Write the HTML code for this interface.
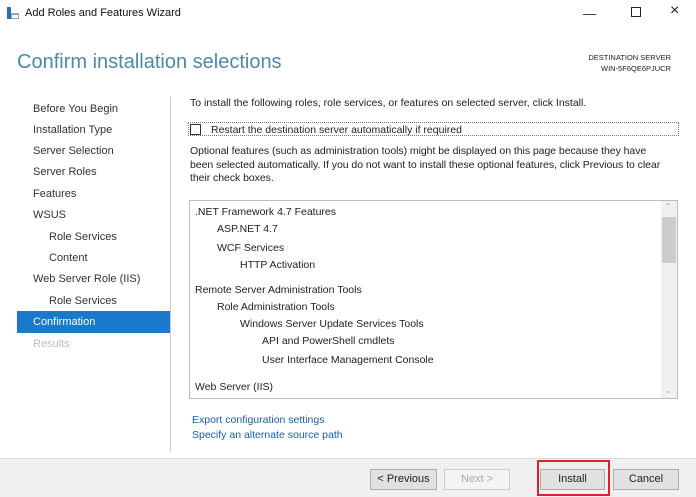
<!DOCTYPE html>
<html><head><meta charset="utf-8"><style>
*{margin:0;padding:0;box-sizing:border-box}
body{width:696px;height:497px;background:#fff;font-family:"Liberation Sans",sans-serif;font-size:11px;color:#1e1e1e;position:relative;overflow:hidden}
.a{position:absolute;white-space:nowrap}
.nav{position:absolute;left:33px;font-size:11px;color:#333}
.li{position:absolute;font-size:10.5px;color:#1e1e1e}
.btn{position:absolute;top:469px;height:21px;border:1px solid #adadad;background:#e1e1e1;font-size:11px;text-align:center;line-height:19px;color:#222}
</style></head><body>
<svg class="a" style="left:6px;top:6px" width="14" height="14" viewBox="0 0 14 14"><rect x="1" y="1" width="4" height="12" fill="#2a6fb0"/><rect x="5" y="7" width="8" height="6" fill="#7fa9cf"/><rect x="6" y="9" width="6" height="3" fill="#fff"/></svg>
<div class="a" style="left:25px;top:7px;font-size:11px;color:#111">Add Roles and Features Wizard</div>
<div class="a" style="left:583px;top:6px;font-size:13px;color:#222">—</div>
<div class="a" style="left:631px;top:7px;width:10px;height:10px;border:1px solid #222"></div>
<div class="a" style="left:670px;top:2px;font-size:16px;color:#222">×</div>
<div class="a" style="left:17px;top:51px;font-size:20px;color:#4c8aa6">Confirm installation selections</div>
<div class="a" style="left:560px;top:52px;width:111px;text-align:right;font-size:7.5px;line-height:11px;color:#222">DESTINATION SERVER<br>WIN-5F6QE6PJUCR</div>
<div class="a" style="left:170px;top:97px;width:1px;height:355px;background:#ccc"></div>
<div class="nav" style="top:103px">Before You Begin</div>
<div class="nav" style="top:124px">Installation Type</div>
<div class="nav" style="top:145px">Server Selection</div>
<div class="nav" style="top:166px">Server Roles</div>
<div class="nav" style="top:188px">Features</div>
<div class="nav" style="top:209px">WSUS</div>
<div class="nav" style="top:231px;left:49px">Role Services</div>
<div class="nav" style="top:252px;left:49px">Content</div>
<div class="nav" style="top:273px">Web Server Role (IIS)</div>
<div class="nav" style="top:295px;left:49px">Role Services</div>
<div class="a" style="left:17px;top:311px;width:153px;height:22px;background:#1979ca"></div>
<div class="nav" style="top:316px;color:#fff">Confirmation</div>
<div class="nav" style="top:338px;color:#bbb">Results</div>
<div class="a" style="left:190px;top:97px;font-size:10.5px">To install the following roles, role services, or features on selected server, click Install.</div>
<div class="a" style="left:188px;top:122px;width:491px;height:14px;border:1px dotted #777"></div>
<div class="a" style="left:190px;top:124px;width:11px;height:11px;border:1px solid #333;background:#fff"></div>
<div class="a" style="left:211px;top:124px;font-size:10.5px">Restart the destination server automatically if required</div>
<div class="a" style="left:190px;top:145px;font-size:10.5px;line-height:13.5px;width:495px;letter-spacing:-0.05px">Optional features (such as administration tools) might be displayed on this page because they have<br>been selected automatically. If you do not want to install these optional features, click Previous to clear<br>their check boxes.</div>
<div class="a" style="left:189px;top:200px;width:489px;height:199px;border:1px solid #bbb;background:#fff"></div>
<div class="a" style="left:661px;top:201px;width:16px;height:197px;background:#f0f0f0"></div>
<div class="a" style="left:662px;top:217px;width:14px;height:46px;background:#cdcdcd"></div>
<div class="a" style="left:665px;top:202px;font-size:8px;color:#aaa">⌃</div>
<div class="a" style="left:665px;top:386px;font-size:8px;color:#aaa">⌄</div>
<div class="li" style="left:195px;top:206px">.NET Framework 4.7 Features</div>
<div class="li" style="left:217px;top:223px">ASP.NET 4.7</div>
<div class="li" style="left:217px;top:242px">WCF Services</div>
<div class="li" style="left:240px;top:259px">HTTP Activation</div>
<div class="li" style="left:195px;top:284px">Remote Server Administration Tools</div>
<div class="li" style="left:217px;top:301px">Role Administration Tools</div>
<div class="li" style="left:240px;top:318px">Windows Server Update Services Tools</div>
<div class="li" style="left:262px;top:335px">API and PowerShell cmdlets</div>
<div class="li" style="left:262px;top:354px">User Interface Management Console</div>
<div class="li" style="left:195px;top:381px">Web Server (IIS)</div>
<div class="a" style="left:192px;top:414px;font-size:10.5px;color:#1a5fa8">Export configuration settings</div>
<div class="a" style="left:192px;top:429px;font-size:10.5px;color:#1a5fa8">Specify an alternate source path</div>
<div class="a" style="left:0;top:458px;width:696px;height:39px;background:#f0f0f0;border-top:1px solid #ddd"></div>
<div class="btn" style="left:370px;width:67px">&lt; Previous</div>
<div class="btn" style="left:444px;width:66px;background:#f4f4f4;border-color:#ccc;color:#aaa">Next &gt;</div>
<div class="btn" style="left:540px;width:65px">Install</div>
<div class="a" style="left:537px;top:460px;width:73px;height:36px;border:2px solid #e0202a"></div>
<div class="btn" style="left:613px;width:66px">Cancel</div>
</body></html>
